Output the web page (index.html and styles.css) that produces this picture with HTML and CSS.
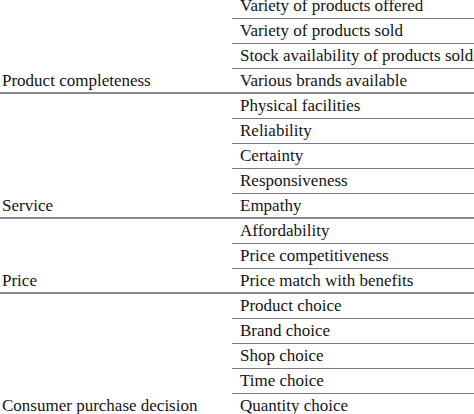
FILE: index.html
```html
<!DOCTYPE html>
<html>
<head>
<meta charset="utf-8">
<link rel="stylesheet" href="styles.css">
</head>
<body>
<div class="table">
  <section class="group">
    <div class="label">Product completeness</div>
    <ul class="items">
      <li>Variety of products offered</li>
      <li>Variety of products sold</li>
      <li>Stock availability of products sold</li>
      <li>Various brands available</li>
    </ul>
  </section>
  <section class="group">
    <div class="label">Service</div>
    <ul class="items">
      <li>Physical facilities</li>
      <li>Reliability</li>
      <li>Certainty</li>
      <li>Responsiveness</li>
      <li>Empathy</li>
    </ul>
  </section>
  <section class="group">
    <div class="label">Price</div>
    <ul class="items">
      <li>Affordability</li>
      <li>Price competitiveness</li>
      <li>Price match with benefits</li>
    </ul>
  </section>
  <section class="group">
    <div class="label">Consumer purchase decision</div>
    <ul class="items">
      <li>Product choice</li>
      <li>Brand choice</li>
      <li>Shop choice</li>
      <li>Time choice</li>
      <li>Quantity choice</li>
    </ul>
  </section>
</div>
</body>
</html>
```

FILE: styles.css
```css
html, body {
  margin: 0;
  padding: 0;
  background: #ffffff;
}
body {
  width: 474px;
  height: 414px;
  overflow: hidden;
  font-family: "Liberation Serif", "Times New Roman", serif;
  font-size: 17px;
  color: #141414;
}
.table {
  margin-top: -6px;
}
.group {
  display: grid;
  grid-template-columns: 232px 1fr;
  border-bottom: 2px solid #8a8a8a;
}
.label {
  align-self: end;
  height: 23px;
  line-height: 24px;
  padding-left: 2px;
  white-space: nowrap;
}
.items {
  list-style: none;
  margin: 0;
  padding: 0;
}
.items li {
  height: 24px;
  line-height: 24px;
  padding-left: 8px;
  white-space: nowrap;
  border-bottom: 1px solid #7a7a7a;
}
.items li:last-child {
  height: 23px;
  border-bottom: none;
}
```
